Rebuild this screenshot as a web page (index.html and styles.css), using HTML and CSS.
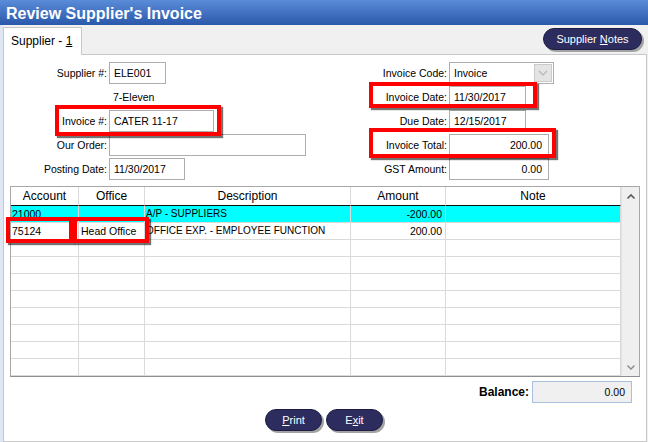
FILE: index.html
```html
<!DOCTYPE html>
<html>
<head>
<meta charset="utf-8">
<link rel="stylesheet" href="styles.css">
</head>
<body>
<div class="page">
  <div class="titlebar">Review Supplier's Invoice</div>
  <div class="main">
    <div class="tabs">
      <div class="tab">Supplier - <u>1</u></div>
      <div class="tabfill"><button class="btn btn-notes">Supplier <u>N</u>otes</button></div>
    </div>
    <div class="panel">
      <div class="form">
        <div class="lbl">Supplier #:</div>
        <div class="cell"><div class="inp w57">ELE001</div></div>
        <div class="lbl">Invoice Code:</div>
        <div class="cell">
          <div class="inp select w105">Invoice
            <span class="dd"><svg width="10" height="6" viewBox="0 0 10 6"><polyline points="1,1 5,5 9,1" fill="none" stroke="#b4b4b4" stroke-width="1.2"/></svg></span>
          </div>
        </div>

        <div class="lbl"></div>
        <div class="cell"><div class="plain">7-Eleven</div></div>
        <div class="lbl">Invoice Date:</div>
        <div class="cell"><div class="inp w77">11/30/2017</div></div>

        <div class="lbl">Invoice #:</div>
        <div class="cell"><div class="inp w105">CATER 11-17</div></div>
        <div class="lbl">Due Date:</div>
        <div class="cell"><div class="inp w77">12/15/2017</div></div>

        <div class="lbl">Our Order:</div>
        <div class="cell"><div class="inp w197"></div></div>
        <div class="lbl">Invoice Total:</div>
        <div class="cell"><div class="inp w100 num">200.00</div></div>

        <div class="lbl">Posting Date:</div>
        <div class="cell"><div class="inp w76">11/30/2017</div></div>
        <div class="lbl">GST Amount:</div>
        <div class="cell"><div class="inp w100 num">0.00</div></div>
      </div>

      <div class="grid">
        <div class="gbody">
          <div class="row head">
            <div class="c">Account</div>
            <div class="c">Office</div>
            <div class="c">Description</div>
            <div class="c">Amount</div>
            <div class="c">Note</div>
          </div>
          <div class="row sel">
            <div class="c">21000</div>
            <div class="c"></div>
            <div class="c desc">A/P - SUPPLIERS</div>
            <div class="c amt">-200.00</div>
            <div class="c"></div>
          </div>
          <div class="row">
            <div class="c">75124</div>
            <div class="c off">Head Office</div>
            <div class="c desc">OFFICE EXP. - EMPLOYEE FUNCTION</div>
            <div class="c amt">200.00</div>
            <div class="c"></div>
          </div>
          <div class="row"><div class="c"></div><div class="c"></div><div class="c"></div><div class="c"></div><div class="c"></div></div>
          <div class="row"><div class="c"></div><div class="c"></div><div class="c"></div><div class="c"></div><div class="c"></div></div>
          <div class="row"><div class="c"></div><div class="c"></div><div class="c"></div><div class="c"></div><div class="c"></div></div>
          <div class="row"><div class="c"></div><div class="c"></div><div class="c"></div><div class="c"></div><div class="c"></div></div>
          <div class="row"><div class="c"></div><div class="c"></div><div class="c"></div><div class="c"></div><div class="c"></div></div>
          <div class="row"><div class="c"></div><div class="c"></div><div class="c"></div><div class="c"></div><div class="c"></div></div>
          <div class="row"><div class="c"></div><div class="c"></div><div class="c"></div><div class="c"></div><div class="c"></div></div>
          <div class="row"><div class="c"></div><div class="c"></div><div class="c"></div><div class="c"></div><div class="c"></div></div>
        </div>
        <div class="scroll">
          <svg width="10" height="7" viewBox="0 0 10 7"><polyline points="1.5,5.5 5,2 8.5,5.5" fill="none" stroke="#5a5a5a" stroke-width="1.6"/></svg>
          <svg width="10" height="7" viewBox="0 0 10 7"><polyline points="1.5,1.5 5,5 8.5,1.5" fill="none" stroke="#8a8a8a" stroke-width="1.4"/></svg>
        </div>
      </div>

      <div class="balance">
        <span class="blbl">Balance:</span>
        <div class="binp">0.00</div>
      </div>

      <div class="actions">
        <button class="btn btn-act"><u>P</u>rint</button>
        <button class="btn btn-act">E<u>x</u>it</button>
      </div>
    </div>
  </div>

  <div class="mark m-inv"></div>
  <div class="mark m-date"></div>
  <div class="mark m-total"></div>
  <div class="mark m-acct"></div>
  <div class="mark m-office"></div>
</div>
</body>
</html>
```
FILE: styles.css
```css
* { box-sizing: border-box; }
html, body { margin: 0; padding: 0; }
body {
  width: 648px;
  height: 442px;
  overflow: hidden;
  background: #f0f0f0;
  font-family: "Liberation Sans", Arial, sans-serif;
  font-size: 10.5px;
  color: #000;
}
.page { position: relative; width: 648px; height: 442px; }

.titlebar {
  height: 25px;
  background: linear-gradient(#5a8cd9, #2b58aa);
  color: #fff;
  font-weight: bold;
  font-size: 16px;
  line-height: 28px;
  padding-left: 6px;
}

.main {
  border-left: 3px solid #dde6f2;
  height: 417px;
}

.tabs {
  display: flex;
  height: 30px;
  margin-right: 1px;
}
.tab {
  margin-top: 2px;
  width: 79px;
  height: 28px;
  background: #fff;
  border: 1px solid #c8c8c8;
  border-bottom: none;
  font-size: 12px;
  padding: 6px 0 0 7px;
}
.tab u { text-decoration: underline; }
.tabfill {
  flex: 1;
  border-bottom: 1px solid #c8c8c8;
  display: flex;
  justify-content: flex-end;
  align-items: flex-start;
  padding-top: 3px;
  padding-right: 5px;
}

.btn {
  font-family: "Liberation Sans", Arial, sans-serif;
  font-size: 11px;
  color: #fff;
  background: #2c2c5e;
  border: 1px solid #1c1c44;
  border-radius: 11px;
  height: 22px;
  padding: 0;
  box-shadow: 2px 2px 0 #a3a3a3;
}
.btn-notes { width: 99px; }
.btn-act { width: 57px; }

.panel {
  margin-right: 1px;
  height: 387px;
  background: #fff;
  border: 1px solid #c8c8c8;
  border-top: none;
  padding-top: 7px;
}

.form {
  display: grid;
  grid-template-columns: 105px 197px 143px 1fr;
  grid-auto-rows: 22px;
  row-gap: 2px;
}
.lbl {
  text-align: right;
  padding-right: 2px;
  line-height: 22px;
  white-space: nowrap;
}
.cell { display: flex; align-items: stretch; }
.inp {
  position: relative;
  border: 1px solid #adadad;
  background: #fff;
  line-height: 20px;
  padding: 0 4px;
  white-space: nowrap;
  overflow: hidden;
}
.inp.num { text-align: right; padding-right: 6px; }
.plain { padding-left: 4px; line-height: 22px; }
.w57 { width: 57px; }
.w76 { width: 76px; }
.w77 { width: 77px; }
.w100 { width: 100px; }
.w105 { width: 105px; }
.w197 { width: 197px; }
.select { display: flex; justify-content: space-between; padding-right: 1px; }
.dd {
  width: 18px;
  margin: 1px 0;
  background: #e4e4e4;
  border: 1px solid #cacaca;
  display: flex;
  align-items: center;
  justify-content: center;
}

.grid {
  margin: 6px 6px 0 6px;
  height: 191px;
  border: 1px solid #a7a7a7;
  border-bottom-color: #8f8f8f;
  display: flex;
}
.gbody { flex: 1; }
.row {
  display: grid;
  grid-template-columns: 68px 66px 206px 95px 1fr;
  height: 17px;
}
.row .c {
  border-right: 1px solid #dadada;
  border-bottom: 1px solid #dadada;
  line-height: 16px;
  padding: 0 1px;
  white-space: nowrap;
  overflow: hidden;
}
.row.head { height: 19px; }
.row.head .c {
  border-bottom: 1px solid #111;
  text-align: center;
  font-size: 12px;
  line-height: 18px;
}
.row.sel { background: #00ffff; }
.c.desc { font-size: 10px; }
.c.amt { text-align: right; padding-right: 3px; }
.c.off { padding-left: 2px; }

.scroll {
  width: 18px;
  background: #efefef;
  border-left: 1px solid #e2e2e2;
  display: flex;
  flex-direction: column;
  justify-content: space-between;
  align-items: center;
  padding: 6px 0 5px;
}

.balance {
  margin-top: 4px;
  margin-right: 14px;
  display: flex;
  justify-content: flex-end;
  align-items: center;
  gap: 3px;
}
.blbl { font-weight: bold; font-size: 12px; }
.binp {
  width: 100px;
  height: 22px;
  background: #f0f0f0;
  border: 1px solid #a9c0dc;
  text-align: right;
  padding-right: 6px;
  line-height: 20px;
}

.actions {
  margin-top: 6px;
  display: flex;
  justify-content: center;
  gap: 4px;
  padding-right: 2px;
}

.mark {
  position: absolute;
  border: 4px solid #ff0000;
  box-shadow: 2px 2px 1px rgba(0,0,0,0.55);
}
.m-inv { left: 55px; top: 105px; width: 166px; height: 31px; }
.m-date { left: 369px; top: 82px; width: 168px; height: 26px; }
.m-total { left: 369px; top: 128px; width: 187px; height: 30px; }
.m-acct { left: 6px; top: 217px; width: 67px; height: 26px; }
.m-office { left: 73px; top: 217px; width: 76px; height: 26px; }
```
